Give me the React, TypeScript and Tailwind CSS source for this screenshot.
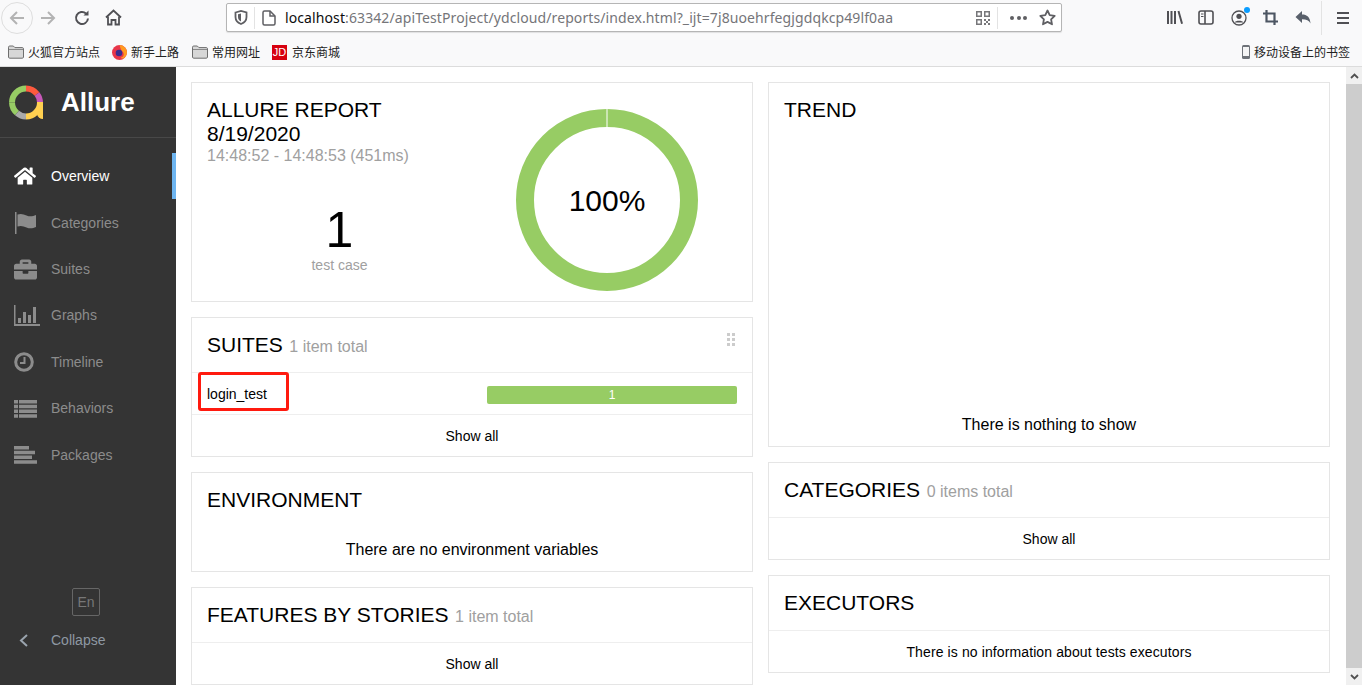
import React from "react";
import { FaHome, FaBriefcase } from "react-icons/fa";

const cjk = { fontFamily: '"Noto Sans CJK SC", "Noto Sans", sans-serif' };

function Folder() {
  return (
    <svg width="16" height="14" viewBox="0 0 16 14" className="shrink-0">
      <path d="M.5 12V2.2C.5 1.5 1 1 1.7 1h3.6l1.6 1.6h7.4c.7 0 1.2.5 1.2 1.2V12c0 .7-.5 1.2-1.2 1.2H1.7C1 13.200.5 12.700.5 12z" fill="#d7d7d7" stroke="#6e6e6e" />
      <path d="M1 4.500h14" stroke="#8a8a8a" />
    </svg>
  );
}

function Bookmark({ icon, label, className }: { icon: React.ReactNode; label: string; className?: string }) {
  return (
    <div className={"flex items-center " + (className ?? "")}>
      {icon}
      <span className="text-[12px] text-[#222]" style={cjk}>{label}</span>
    </div>
  );
}

function BrowserChrome() {
  return (
    <div className="shrink-0 h-[67px] bg-[#f9f9fa] border-b border-[#dcdcdc]">
      <div className="h-[35px] flex items-center relative">
        <div className="ml-[1px] w-[32px] h-[32px] rounded-full border border-[#dedede] flex items-center justify-center">
          <svg width="18" height="18" viewBox="0 0 18 18" fill="none" stroke="#b3b3b3" strokeWidth="2"><path d="M16 9H3M9 3 3 9l6 6" /></svg>
        </div>
        <svg className="ml-[6px]" width="18" height="18" viewBox="0 0 18 18" fill="none" stroke="#b3b3b3" strokeWidth="2"><path d="M2 9h13M9 3l6 6-6 6" /></svg>
        <svg className="ml-[16px]" width="18" height="18" viewBox="0 0 18 18" fill="none" stroke="#505054" strokeWidth="2"><path d="M15 9.500A6 6 0 1 1 13 4.500" /><path d="M15.500 1.500v5h-5z" fill="#505054" stroke="none" /></svg>
        <svg className="ml-[14px]" width="17" height="17" viewBox="0 0 17 17" fill="none" stroke="#505054" strokeWidth="1.800"><path d="M1 8.500 8.500 1.500 16 8.500" /><path d="M3 7.500V15.500h3.500v-4.500h4v4.500H14V7.500" /></svg>
        <div className="ml-[104px] w-[836px] h-[29px] bg-white border border-[#b5b5b5] rounded-[2px] flex items-center shadow-[0_1px_1px_rgba(0,0,0,0.1)]">
          <svg className="ml-[7px]" width="14" height="15" viewBox="0 0 14 15" fill="none" stroke="#5f5f63" strokeWidth="1.800"><path d="M1.500 2.500 7 1l5.500 1.500V7c0 3.500-2.500 5.800-5.500 7-3-1.200-5.500-3.500-5.500-7z" /><path d="M7 3.500v8c-1.800-.8-3-2.300-3-4.500V4.300z" fill="#5f5f63" stroke="none" /></svg>
          <div className="ml-[6px] w-px h-[22px] bg-[#e3e3e3]" />
          <svg className="ml-[7px]" width="14" height="16" viewBox="0 0 14 16" fill="none" stroke="#5f5f63" strokeWidth="1.500"><path d="M1 2.500C1 1.500 1.500 1 2.500 1H8l5 5v7.500c0 1-.5 1.500-1.500 1.500h-9C1.500 15 1 14.500 1 13.500z" /><path d="M8 1v5h5" /></svg>
          <span className="ml-[9px] text-[14px] whitespace-nowrap tracking-[0.1px] text-[#757579]" style={{ fontFamily: '"Noto Sans", sans-serif' }}>
            <span className="text-[#0c0c0d]">localhost</span>:63342/apiTestProject/ydcloud/reports/index.html?_ijt=7j8uoehrfegjgdqkcp49lf0aa
          </span>
          <div className="flex-1" />
          <svg width="14" height="14" viewBox="0 0 14 14" fill="#77777a"><path fillRule="evenodd" d="M0 0h6v6H0zM1.500 1.500v3h3v-3zM8 0h6v6H8zM9.500 1.500v3h3v-3zM0 8h6v6H0zM1.500 9.500v3h3v-3z" /><path d="M8 8h2v2H8zM12 8h2v2h-2zM10 10h2v2h-2zM8 12h2v2H8zM12 12h2v2h-2z" /></svg>
          <div className="ml-[7px] w-px h-[22px] bg-[#e3e3e3]" />
          <div className="ml-[12px] flex gap-[2.500px]">
            <span className="w-[4px] h-[4px] rounded-full bg-[#5f5f63]" />
            <span className="w-[4px] h-[4px] rounded-full bg-[#5f5f63]" />
            <span className="w-[4px] h-[4px] rounded-full bg-[#5f5f63]" />
          </div>
          <svg className="ml-[12px] mr-[5px]" width="17" height="17" viewBox="0 0 17 17" fill="none" stroke="#5f5f63" strokeWidth="1.800" strokeLinejoin="round"><path d="M8.500 1.500l2.200 4.600 5 .7-3.600 3.500.9 5-4.500-2.400L4 15.300l.9-5L1.300 6.800l5-.7z" /></svg>
        </div>
        <svg className="ml-[105px]" width="16" height="15" viewBox="0 0 16 15" fill="#505054"><path d="M0 1h2v13H0zM3.500 1h2v13h-2zM7 1h2v13H7zM10.500 1.300l1.900-.6 3.600 12.700-1.900.6z" /></svg>
        <svg className="ml-[15px]" width="16" height="15" viewBox="0 0 16 15" fill="none" stroke="#505054" strokeWidth="1.600"><rect x="1" y="1" width="14" height="13" rx="2" /><path d="M7 1v13" /><path d="M3 4h2.500M3 6.500h2.500" strokeWidth="1" /></svg>
        <div className="ml-[17px] relative w-[16px] h-[16px]">
          <svg width="16" height="16" viewBox="0 0 16 16" fill="none" stroke="#505054" strokeWidth="1.300"><circle cx="8" cy="8" r="7" /><circle cx="8" cy="6.300" r="2.600" fill="#505054" stroke="none" /><path d="M3.500 12.500c1-2.500 8-2.500 9 0" fill="#505054" stroke="none" /></svg>
          <span className="absolute -top-[3px] -right-[3px] w-[6px] h-[6px] rounded-full bg-[#0a9dff]" />
        </div>
        <svg className="ml-[16px]" width="15" height="15" viewBox="0 0 15 15" fill="none" stroke="#4d5663" strokeWidth="2.200"><path d="M3.500 0v11.500H15" /><path d="M0 3.500h11.500V15" /></svg>
        <svg className="ml-[17px]" width="16" height="15" viewBox="0 0 16 15" fill="#59606b"><path d="M7 1v3.500c5 0 8 2.500 8.500 9-1.500-3-4-4.300-8.500-4.300V13L.5 7z" /></svg>
        <div className="ml-[10px] w-px h-[34px] bg-[#e3e3e3]" />
        <div className="ml-[15px] w-[12px] flex flex-col gap-[3px]">
          <span className="h-[2px] bg-[#505054]" />
          <span className="h-[2px] bg-[#505054]" />
          <span className="h-[2px] bg-[#505054]" />
        </div>
      </div>
      <div className="mt-[4px] h-[26px] flex items-center pl-[8px] pr-[12px]">
        <Bookmark icon={<Folder />} label="火狐官方站点" className="gap-[4px] mr-[12px]" />
        <Bookmark
          className="gap-[4px] mr-[13px]"
          label="新手上路"
          icon={
            <svg width="15" height="15" viewBox="0 0 15 15" className="shrink-0">
              <circle cx="7.500" cy="7.500" r="7.500" fill="#e8364a" />
              <path d="M7.500 0A7.500 7.500 0 0 1 15 7.500c0 2.500-1.500 5-4 6-1 .3-2 0-2-1 3-.5 3.500-4 1.500-6-1-1-2-2.500-3-6.500z" fill="#ff9a1f" />
              <circle cx="7" cy="8" r="3.300" fill="#3a2d8f" />
            </svg>
          }
        />
        <Bookmark icon={<Folder />} label="常用网址" className="gap-[4px] mr-[12px]" />
        <Bookmark
          className="gap-[5px]"
          label="京东商城"
          icon={
            <span className="w-[15px] h-[15px] bg-[#d7000f] text-white text-[11px] leading-[15px] text-center" style={{ fontFamily: '"Liberation Sans", sans-serif' }}>JD</span>
          }
        />
        <div className="flex-1" />
        <Bookmark
          className="gap-[4px]"
          label="移动设备上的书签"
          icon={
            <svg width="8" height="14" viewBox="0 0 8 14" className="shrink-0"><rect width="8" height="14" rx="1.500" fill="#6e7278" /><rect x="1" y="2" width="6" height="9" fill="#f4f4f4" /></svg>
          }
        />
      </div>
    </div>
  );
}

function Logo() {
  return (
    <svg width="35" height="35" viewBox="0 0 35 35" fill="none" strokeWidth="6">
      <path d="M3 17.500A14 14 0 0 1 17 3.500" stroke="#97cc64" />
      <path d="M17 3.500A14 14 0 0 1 28 9" stroke="#fd5a3e" />
      <path d="M28 9A14 14 0 0 1 31 17.500" stroke="#c758b8" />
      <path d="M3 17.500A14 14 0 0 0 8 28" stroke="#97cc64" />
      <path d="M8 28A14 14 0 0 0 17 31.500" stroke="#aaaaaa" />
      <path d="M17 31.500A14 14 0 0 0 31 17.500" stroke="#ffd050" />
      <path d="M31 17v11c0 2 1.500 3 3 3" stroke="#ffd050" />
    </svg>
  );
}

const Flag = () => (
  <svg width="23" height="22" viewBox="0 0 23 22" fill="currentColor"><path d="M1 0h1.500v22H1z" /><path d="M3.500 2.500c3-1 6-.5 9 1 3 1.200 6 1.200 9.500-.5v12c-3.500 1.700-6.500 1.700-9.500.5-3-1.500-6-2-9-1z" /></svg>
);
const Chart = () => (
  <svg width="26" height="21" viewBox="0 0 26 21" fill="currentColor"><path d="M0 0h1.500v19H26v2H0z" /><path d="M4 13h3v5H4zM9 7h3v11H9zM14 10h3v8h-3zM19 2h3v16h-3z" /></svg>
);
const Clock = () => (
  <svg width="20" height="20" viewBox="0 0 20 20" fill="none" stroke="currentColor" strokeWidth="3"><circle cx="10" cy="10" r="8.300" /><path d="M10.500 5v6H6" strokeWidth="2" /></svg>
);
const ListIcon = () => (
  <svg width="23" height="18" viewBox="0 0 23 18" fill="currentColor"><path d="M0 0h4v3.500H0zM5 0h18v3.500H5zM0 4.700h4v3.500H0zM5 4.700h18v3.500H5zM0 9.500h4V13H0zM5 9.500h18V13H5zM0 14.300h4v3.500H0zM5 14.300h18v3.500H5z" /></svg>
);
const AlignLeft = () => (
  <svg width="23" height="18" viewBox="0 0 23 18" fill="currentColor"><path d="M0 0h15v3.500H0zM0 4.700h21v3.500H0zM0 9.500h18V13H0zM0 14.300h23v3.500H0z" /></svg>
);

const nav: { label: string; icon: React.ReactNode; active?: boolean; h: string }[] = [
  { label: "Overview", icon: <FaHome size={22} />, active: true, h: "h-[46px] mb-[1px]" },
  { label: "Categories", icon: <Flag />, h: "h-[46px]" },
  { label: "Suites", icon: <FaBriefcase size={23} />, h: "h-[46px]" },
  { label: "Graphs", icon: <Chart />, h: "h-[47px]" },
  { label: "Timeline", icon: <Clock />, h: "h-[46px]" },
  { label: "Behaviors", icon: <ListIcon />, h: "h-[47px]" },
  { label: "Packages", icon: <AlignLeft />, h: "h-[46px]" },
];

function Sidebar() {
  return (
    <aside className="w-[176px] shrink-0 bg-[#343434] flex flex-col">
      <div className="h-[71px] shrink-0 border-b border-[#484848] flex items-center pl-[9px] gap-[17px]">
        <Logo />
        <span className="text-white text-[26px] font-bold">Allure</span>
      </div>
      <nav className="mt-[15px] flex flex-col">
        {nav.map((n) => (
          <div key={n.label} className={n.h + " flex items-center relative " + (n.active ? "text-white" : "text-[#8c8c8c]")}>
            <span className="w-[51px] pl-[14px] flex items-center shrink-0">{n.icon}</span>
            <span className="text-[14px]">{n.label}</span>
            {n.active && <span className="absolute right-0 top-0 h-full w-[4px] bg-[#6eb5f0]" />}
          </div>
        ))}
      </nav>
      <div className="flex-1" />
      <div className="self-start ml-[72px] mb-[1px] w-[28px] h-[28px] border border-[#666] rounded-[2px] text-[#777] text-[14px] flex items-center justify-center">En</div>
      <div className="h-[46px] mb-[22px] flex items-center text-[#8e98a3]">
        <span className="w-[51px] pl-[19px] shrink-0">
          <svg width="9" height="13" viewBox="0 0 9 13" fill="none" stroke="#9aa4ae" strokeWidth="2"><path d="M8 1 2 6.500 8 12" /></svg>
        </span>
        <span className="text-[14px]">Collapse</span>
      </div>
    </aside>
  );
}

function Card({ className, children }: { className?: string; children: React.ReactNode }) {
  return <section className={"bg-white border border-[#e5e5e5] shrink-0 flex " + (className ?? "flex-col")}>{children}</section>;
}

function CardHeader({ title, sub }: { title: string; sub?: string }) {
  return (
    <div className="h-[54px] shrink-0 pl-[15px] pt-[13px] whitespace-nowrap">
      <span className="text-[21px] leading-[28px] text-black">{title}</span>
      {sub && <span className="ml-[6.500px] text-[16px] text-[#a0a0a0]">{sub}</span>}
    </div>
  );
}

function ShowAll({ label = "Show all", className }: { label?: string; className?: string }) {
  return <div className={"flex-1 shrink-0 pt-[2px] border-t border-[#eeeeee] flex items-center justify-center text-[14px] text-black " + (className ?? "")}>{label}</div>;
}

function Donut() {
  return (
    <div className="relative w-[184px] h-[184px]">
      <svg width="184" height="184" viewBox="0 0 184 184">
        <circle cx="92" cy="92" r="82" fill="none" stroke="#97cc64" strokeWidth="18" />
        <path d="M92 1v18" stroke="#fff" strokeWidth="1" />
      </svg>
      <span className="absolute inset-0 pt-[1px] flex items-center justify-center text-[30px] text-black">100%</span>
    </div>
  );
}

export default function App() {
  return (
    <div className="w-[1362px] h-[685px] overflow-hidden flex flex-col bg-white" style={{ fontFamily: '"Liberation Sans", Arial, sans-serif' }}>
      <BrowserChrome />
      <div className="flex-1 flex min-h-0">
        <Sidebar />
        <main className="flex-1 min-w-0 overflow-hidden pl-[15px] pt-[15px] pr-[16px] grid grid-cols-2 gap-x-[15px] content-start">
          <div className="flex flex-col gap-[15px]">
            <Card className="h-[220px] flex-row">
              <div className="w-[280px] shrink-0 pl-[15px] pt-[15px] flex flex-col">
                <h1 className="text-[21px] leading-[24px] text-black">ALLURE REPORT<br />8/19/2020</h1>
                <div className="text-[16px] leading-[20px] text-[#a0a0a0] whitespace-nowrap">14:48:52 - 14:48:53 (451ms)</div>
                <div className="mt-[38px] text-center text-[50px] leading-[52px] text-black">1</div>
                <div className="text-center text-[14px] leading-[18px] text-[#a0a0a0]">test case</div>
              </div>
              <div className="flex-1 pt-[25px] pl-[43px]">
                <Donut />
              </div>
            </Card>
            <Card className="h-[140px] flex-col">
              <div className="relative">
                <CardHeader title="SUITES" sub="1 item total" />
                <div className="absolute right-[17px] top-[15px] grid grid-cols-2 gap-[2px]">
                  {[0, 1, 2, 3, 4, 5].map((i) => (
                    <span key={i} className="w-[3px] h-[3px] bg-[#cccccc]" />
                  ))}
                </div>
              </div>
              <div className="relative h-[42px] shrink-0 border-t border-[#eeeeee] flex items-center pl-[15px] pr-[15px] justify-between">
                <span className="mt-[1px] text-[14px] text-black">login_test</span>
                <div className="w-[250px] h-[18px] mt-[2px] rounded-[2px] bg-[#97cc64] text-white text-[12px] flex items-center justify-center">1</div>
                <span className="absolute left-[6px] -top-[1px] w-[91px] h-[39px] border-[3px] border-[#ff1a0f] rounded-[3px]" />
              </div>
              <ShowAll />
            </Card>
            <Card className="h-[100px] flex-col">
              <CardHeader title="ENVIRONMENT" />
              <div className="flex-1 flex items-center justify-center text-[16px] text-black pb-[2px] pt-[4px]">There are no environment variables</div>
            </Card>
            <Card className="h-[98px] flex-col">
              <CardHeader title="FEATURES BY STORIES" sub="1 item total" />
              <ShowAll />
            </Card>
          </div>
          <div className="flex flex-col gap-[15px]">
            <Card className="h-[365px] flex-col">
              <CardHeader title="TREND" />
              <div className="flex-1 flex items-end justify-center pb-[9px] text-[16px] text-black">There is nothing to show</div>
            </Card>
            <Card className="h-[98px] flex-col">
              <CardHeader title="CATEGORIES" sub="0 items total" />
              <ShowAll />
            </Card>
            <Card className="h-[98px] flex-col">
              <CardHeader title="EXECUTORS" />
              <ShowAll label="There is no information about tests executors" className="tracking-[0.11px]" />
            </Card>
          </div>
        </main>
        <div className="w-[16px] shrink-0 bg-[#f0f0f0] flex flex-col">
          <div className="h-[17px] shrink-0 flex items-center justify-center">
            <svg width="9" height="6" viewBox="0 0 9 6" fill="none" stroke="#505050" strokeWidth="1.800"><path d="M1 5l3.500-3.500L8 5" /></svg>
          </div>
          <div className="flex-1 bg-[#cdcdcd]" />
          <div className="h-[17px] shrink-0 flex items-center justify-center">
            <svg width="9" height="6" viewBox="0 0 9 6" fill="none" stroke="#505050" strokeWidth="1.800"><path d="M1 1l3.500 3.500L8 1" /></svg>
          </div>
        </div>
      </div>
    </div>
  );
}
